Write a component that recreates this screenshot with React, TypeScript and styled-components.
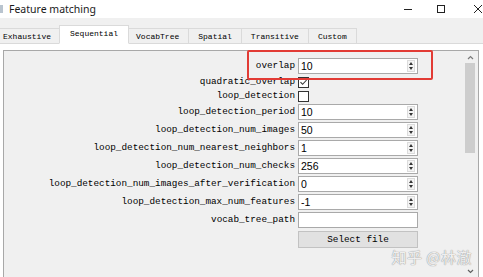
import * as React from 'react'
import styled, { createGlobalStyle } from 'styled-components'

const GlobalStyle = createGlobalStyle`
  html, body {
    margin: 0;
    padding: 0;
    background: #ffffff;
  }
`

const MONO = `"Liberation Mono", "DejaVu Sans Mono", monospace`

const Window = styled.div`
  position: relative;
  width: 483px;
  height: 277px;
  overflow: hidden;
  display: flex;
  flex-direction: column;
  background: #ffffff;
`

const TitleBar = styled.div`
  height: 18px;
  flex: none;
  display: flex;
  align-items: center;
  background: #ffffff;
`

const AppIcon = styled.span`
  width: 8px;
  height: 8px;
  margin-left: -5px;
  background: #b9c4cf;
  flex: none;
`

const Title = styled.span`
  margin-left: 6px;
  font-family: "Noto Sans", "Liberation Sans", sans-serif;
  font-size: 10.5px;
  color: #1a1a1a;
  flex: 1;
`

const Controls = styled.div`
  display: flex;
  align-items: center;
  height: 18px;
`

const ControlIcon = styled.svg<{ $gap: number }>`
  margin-left: ${(p) => p.$gap}px;
  flex: none;
`

const TabStrip = styled.div`
  height: 25px;
  flex: none;
  display: flex;
  align-items: flex-end;
  background: #f0f0f0;
  margin-left: -6px;
`

const Tab = styled.div<{ $active?: boolean }>`
  box-sizing: border-box;
  height: ${(p) => (p.$active ? 19 : 16)}px;
  padding: 0 ${(p) => (p.$active ? 10 : 9)}px;
  margin: 0 ${(p) => (p.$active ? -2 : 0)}px -1px;
  display: flex;
  align-items: center;
  font-family: ${MONO};
  font-size: 8px;
  color: #000;
  background: ${(p) => (p.$active ? '#ffffff' : '#f0f0f0')};
  border: 1px solid #dadada;
  border-bottom: ${(p) => (p.$active ? '1px solid #ffffff' : '1px solid #dadada')};
  border-left: ${(p) => (p.$active ? '1px solid #dadada' : 'none')};
  position: relative;
  z-index: ${(p) => (p.$active ? 1 : 0)};
  padding-bottom: ${(p) => (p.$active ? 2 : 0)}px;
`

const Pane = styled.div`
  flex: 1;
  display: flex;
  background: #ffffff;
  border-top: 1px solid #dadada;
  padding: 6px 4px 0 3px;
  min-height: 0;
`

const ScrollArea = styled.div`
  flex: 1;
  display: flex;
  border: 1px solid #a8a8a8;
  border-bottom: none;
  background: #f0f0f0;
`

const Form = styled.div`
  flex: 1;
  display: grid;
  grid-template-columns: 1fr 120px;
  grid-auto-rows: min-content;
  column-gap: 3px;
  row-gap: 2px;
  padding: 7px 44px 0 0;
  align-items: center;
`

const Label = styled.label`
  justify-self: end;
  font-family: ${MONO};
  font-size: 9.33px;
  color: #000;
  white-space: nowrap;
  line-height: 12px;
`

const Field = styled.div`
  box-sizing: border-box;
  height: 16px;
  display: flex;
  align-items: center;
  background: #ffffff;
  border: 1px solid #a9a9a9;
  padding-left: 2px;
  font-family: "Liberation Sans", Arial, sans-serif;
  font-size: 10.5px;
  color: #000;
`

const Value = styled.span`
  flex: 1;
`

const Spinner = styled.div`
  width: 8px;
  height: 12px;
  margin-right: 2px;
  display: flex;
  flex-direction: column;
  align-items: center;
  justify-content: space-between;
  background: #f4f4f4;
  border: 1px solid #dcdcdc;
  box-sizing: border-box;
  padding: 1px 0;
`

const Arrow = styled.span<{ $down?: boolean }>`
  width: 0;
  height: 0;
  border-left: 2px solid transparent;
  border-right: 2px solid transparent;
  ${(p) => (p.$down ? 'border-top: 3px solid #333;' : 'border-bottom: 3px solid #333;')}
`

const CheckRow = styled.div`
  height: 12px;
  display: flex;
  align-items: center;
`

const Box = styled.span`
  box-sizing: border-box;
  width: 11px;
  height: 11px;
  background: #ffffff;
  border: 1px solid #333;
  display: flex;
  align-items: center;
  justify-content: center;
`

const Button = styled.div`
  box-sizing: border-box;
  height: 17px;
  margin-top: 1px;
  display: flex;
  align-items: center;
  justify-content: center;
  background: #e1e1e1;
  border: 1px solid #c2c2c2;
  font-family: ${MONO};
  font-size: 9.33px;
  color: #000;
`

const ScrollBar = styled.div`
  width: 16px;
  flex: none;
  display: flex;
  flex-direction: column;
  align-items: center;
  background: #f0f0f0;
`

const ScrollArrow = styled.svg`
  flex: none;
  margin: 4px 0 3px;
`

const Thumb = styled.div`
  width: 10px;
  height: 90px;
  background: #cdcdcd;
`

const Spacer = styled.div`
  flex: 1;
`

const Highlight = styled.div`
  position: absolute;
  left: 247px;
  top: 50px;
  width: 186px;
  height: 30px;
  box-sizing: border-box;
  border: 2px solid #e23b35;
  border-radius: 2px;
  pointer-events: none;
`

const Watermark = styled.div`
  position: absolute;
  right: 11px;
  top: 246px;
  font-family: "Noto Sans CJK SC", "Noto Sans", sans-serif;
  font-size: 15px;
  color: rgba(255, 255, 255, 0.85);
  text-shadow: 0 0 1px #9a9a9a, 0 0 1px #9a9a9a;
  letter-spacing: 0.5px;
  white-space: nowrap;
`

type Row =
  | { kind: 'spin'; label: string; value: string }
  | { kind: 'check'; label: string; checked: boolean }
  | { kind: 'text'; label: string }

const rows: Row[] = [
  { kind: 'spin', label: 'overlap', value: '10' },
  { kind: 'check', label: 'quadratic_overlap', checked: true },
  { kind: 'check', label: 'loop_detection', checked: false },
  { kind: 'spin', label: 'loop_detection_period', value: '10' },
  { kind: 'spin', label: 'loop_detection_num_images', value: '50' },
  { kind: 'spin', label: 'loop_detection_num_nearest_neighbors', value: '1' },
  { kind: 'spin', label: 'loop_detection_num_checks', value: '256' },
  { kind: 'spin', label: 'loop_detection_num_images_after_verification', value: '0' },
  { kind: 'spin', label: 'loop_detection_max_num_features', value: '-1' },
  { kind: 'text', label: 'vocab_tree_path' },
]

const tabs = ['Exhaustive', 'Sequential', 'VocabTree', 'Spatial', 'Transitive', 'Custom']

function Check() {
  return (
    <svg width="9" height="9" viewBox="0 0 9 9" fill="none">
      <path d="M1.5 4.2L3.6 6.3L7.6 2" stroke="#333" strokeWidth="1.1" />
    </svg>
  )
}

function RowControl({ row }: { row: Row }) {
  if (row.kind === 'check') {
    return (
      <CheckRow>
        <Box>{row.checked ? <Check /> : null}</Box>
      </CheckRow>
    )
  }
  if (row.kind === 'text') {
    return <Field />
  }
  return (
    <Field>
      <Value>{row.value}</Value>
      <Spinner>
        <Arrow />
        <Arrow $down />
      </Spinner>
    </Field>
  )
}

export default function App() {
  return (
    <>
      <GlobalStyle />
      <Window>
        <TitleBar>
          <AppIcon />
          <Title>Feature matching</Title>
          <Controls>
            <ControlIcon $gap={0} width="10" height="10" viewBox="0 0 10 10">
              <path d="M1 5.5H9" stroke="#222" strokeWidth="1" />
            </ControlIcon>
            <ControlIcon $gap={23} width="10" height="10" viewBox="0 0 10 10" fill="none">
              <rect x="1.5" y="1.5" width="7" height="7" stroke="#222" strokeWidth="1" />
            </ControlIcon>
            <ControlIcon $gap={27} width="10" height="10" viewBox="0 0 10 10">
              <path d="M1 1L9 9M9 1L1 9" stroke="#222" strokeWidth="1" />
            </ControlIcon>
          </Controls>
        </TitleBar>
        <TabStrip>
          {tabs.map((t) => (
            <Tab key={t} $active={t === 'Sequential'}>
              {t}
            </Tab>
          ))}
        </TabStrip>
        <Pane>
          <ScrollArea>
            <Form>
              {rows.map((row) => (
                <React.Fragment key={row.label}>
                  <Label>{row.label}</Label>
                  <RowControl row={row} />
                </React.Fragment>
              ))}
              <span />
              <Button>Select file</Button>
            </Form>
            <ScrollBar>
              <ScrollArrow width="7" height="5" viewBox="0 0 7 5" fill="none">
                <path d="M1 4L3.5 1.5L6 4" stroke="#7a7a7a" strokeWidth="1.2" />
              </ScrollArrow>
              <Thumb />
              <Spacer />
              <ScrollArrow width="7" height="5" viewBox="0 0 7 5" fill="none">
                <path d="M1 1L3.5 3.5L6 1" stroke="#606060" strokeWidth="1.2" />
              </ScrollArrow>
            </ScrollBar>
          </ScrollArea>
        </Pane>
        <Highlight />
        <Watermark>知乎 @林澈</Watermark>
      </Window>
    </>
  )
}
